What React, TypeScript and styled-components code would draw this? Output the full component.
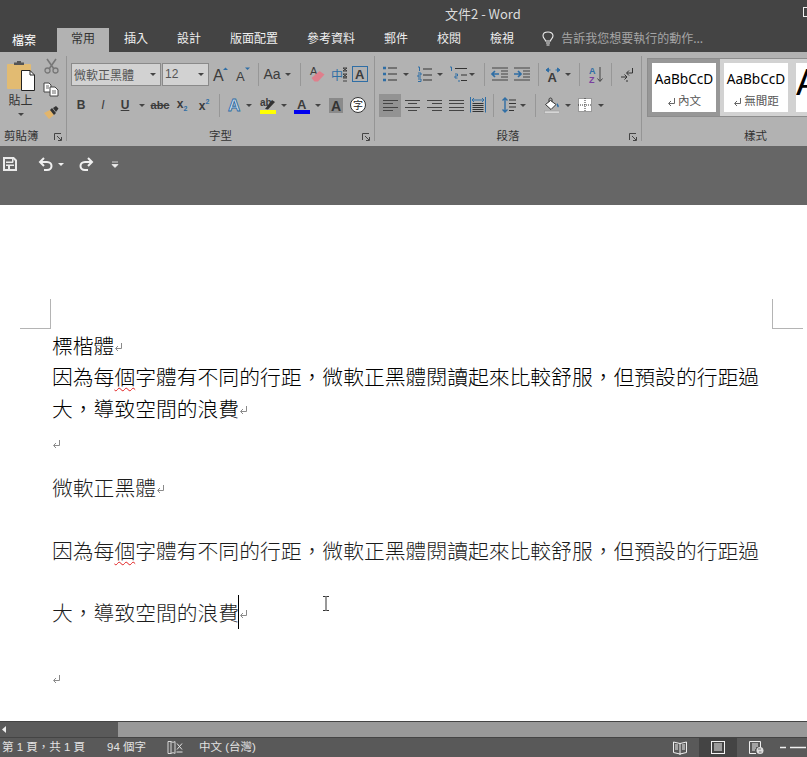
import React from 'react';
import styled, { createGlobalStyle } from 'styled-components';

const ink = '#3c3c3c';
const blue = '#2f6ea5';
const sans = '"Noto Sans CJK TC", "Liberation Sans", sans-serif';

const bodyLine = '因為每';
const wavyWord = '個';
const bodyRest = '字體有不同的行距\uFF0C微軟正黑體閱讀起來比較舒服\uFF0C但預設的行距過';
const lastLine = '大\uFF0C導致空間的浪費';
const pageCount = '第 1 頁\uFF0C共 1 頁';

const GlobalStyle = createGlobalStyle`
  html, body { margin: 0; padding: 0; height: 100%; overflow: hidden; background: #fff; }
  body { font-family: ${sans}; }
`;

const Window = styled.div`
  width: 807px;
  height: 757px;
  display: flex;
  flex-direction: column;
  overflow: hidden;
`;

const TitleBar = styled.div`
  height: 28px;
  flex: none;
  background: #444;
  color: #dcdcdc;
  font-size: 13px;
  line-height: 24px;
  display: flex;
  align-items: center;
  padding-left: 445px;
  position: relative;
`;

const RestoreBox = styled.span`
  position: absolute;
  left: 803px;
  top: 7px;
  width: 8px;
  height: 8px;
  border: 1px solid #eee;
`;

const TabBar = styled.div`
  height: 24px;
  flex: none;
  background: #444;
  display: flex;
`;

const FileTab = styled.div`
  width: 57px;
  padding: 2px 0 0 12px;
  box-sizing: border-box;
  color: #fff;
  font-size: 12px;
  line-height: 20px;
`;

const Tab = styled.div<{ $active?: boolean }>`
  padding: 0 14px;
  margin-right: 1px;
  background: ${p => (p.$active ? '#b2b2b2' : 'transparent')};
  color: ${p => (p.$active ? '#333' : '#f0f0f0')};
  font-size: 12px;
  line-height: 20px;
`;

const Tell = styled.div`
  margin-left: 13px;
  display: flex;
  align-items: center;
  gap: 7px;
  color: #a6a6a6;
  font-size: 12px;
  line-height: 20px;
  height: 20px;
  white-space: nowrap;
`;

const Ribbon = styled.div`
  height: 94px;
  flex: none;
  box-sizing: border-box;
  padding: 4px 0 5px;
  background: #b2b2b2;
  display: flex;
`;

const Group = styled.div<{ $w: number; $last?: boolean }>`
  position: relative;
  width: ${p => p.$w}px;
  flex: none;
  box-sizing: border-box;
  border-right: ${p => (p.$last ? 'none' : '1px solid #959595')};
  display: flex;
  flex-direction: column;
`;

const GroupLabel = styled.div<{ $pl?: number }>`
  margin-top: auto;
  height: 15px;
  line-height: 18px;
  text-align: ${p => (p.$pl === undefined ? 'center' : 'left')};
  padding-left: ${p => p.$pl ?? 0}px;
  font-size: 11.5px;
  color: #333;
`;

const Launcher = styled.svg`
  position: absolute;
  right: 4px;
  bottom: 0;
`;

const ClipBody = styled.div`
  display: flex;
  height: 70px;
`;

const PasteCol = styled.div`
  width: 42px;
  display: flex;
  flex-direction: column;
  align-items: center;
  color: #333;
  font-size: 12px;
  line-height: 16px;
  padding-top: 4px;
  box-sizing: border-box;
`;

const PasteText = styled.span`
  margin-left: -1px;
`;

const PasteCaret = styled.span`
  margin-top: 5px;
  width: 0;
  height: 0;
  display: block;
  border-left: 3px solid transparent;
  border-right: 3px solid transparent;
  border-top: 3px solid #444;
`;

const SmallCol = styled.div`
  width: 18px;
  display: flex;
  flex-direction: column;
  align-items: center;
  gap: 8px;
  padding-top: 2px;
`;

const Rows = styled.div`
  display: flex;
  flex-direction: column;
  gap: 7px;
  padding-top: 6px;
`;

const Row = styled.div<{ $pl: number }>`
  height: 24px;
  display: flex;
  align-items: center;
  padding-left: ${p => p.$pl}px;
`;

const Combo = styled.div<{ $w: number }>`
  width: ${p => p.$w}px;
  height: 23px;
  box-sizing: border-box;
  border: 1px solid #8a8a8a;
  background: #d2d2d2;
  margin-right: 1px;
  padding-left: 2px;
  display: flex;
  align-items: center;
  justify-content: space-between;
  font-family: "Liberation Sans", ${sans};
  font-size: 12px;
  color: #555;
`;

const Tool = styled.div<{ $w: number; $ml?: number; $on?: boolean }>`
  width: ${p => p.$w}px;
  margin-left: ${p => p.$ml ?? 0}px;
  height: 23px;
  flex: none;
  display: flex;
  align-items: center;
  justify-content: center;
  background: ${p => (p.$on ? '#939393' : 'transparent')};
`;

const Sep = styled.span<{ $ml: number; $mr?: number }>`
  width: 1px;
  height: 23px;
  flex: none;
  margin-left: ${p => p.$ml}px;
  margin-right: ${p => p.$mr ?? 0}px;
  background: #979797;
`;

const CaretMark = styled.span`
  width: 0;
  height: 0;
  display: block;
  border-left: 3px solid transparent;
  border-right: 3px solid transparent;
  border-top: 3px solid #444;
`;

const Glyph = styled.span<{ $size: number; $weight?: number; $italic?: boolean; $color?: string; $strike?: boolean; $under?: boolean }>`
  font-family: "Liberation Sans", sans-serif;
  font-size: ${p => p.$size}px;
  font-weight: ${p => p.$weight ?? 700};
  font-style: ${p => (p.$italic ? 'italic' : 'normal')};
  color: ${p => p.$color ?? ink};
  text-decoration: ${p => (p.$strike ? 'line-through' : p.$under ? 'underline' : 'none')};
  line-height: 1;
  position: relative;
`;

const Sub = styled.span<{ $up?: boolean }>`
  font-size: 7px;
  color: ${blue};
  vertical-align: ${p => (p.$up ? '6px' : '-3px')};
`;

const Gallery = styled.div`
  margin: 2px 0 0 5px;
  height: 59px;
  box-sizing: border-box;
  border: 1px solid #8d8d8d;
  border-right: none;
  background: #d2d2d2;
  display: flex;
  overflow: hidden;
`;

const StyleCell = styled.div<{ $on?: boolean }>`
  width: 72px;
  flex: none;
  box-sizing: border-box;
  padding: 4px;
  background: ${p => (p.$on ? '#979797' : 'transparent')};
`;

const StyleCard = styled.div`
  height: 49px;
  background: #fff;
  display: flex;
  flex-direction: column;
  align-items: center;
  overflow: hidden;
  white-space: nowrap;
`;

const Sample = styled.span`
  font-family: "Noto Sans", sans-serif;
  font-size: 13.6px;
  line-height: 20px;
  margin-top: 6px;
  color: #000;
`;

const SampleName = styled.span`
  font-size: 11.5px;
  line-height: 16px;
  margin-top: 3px;
  color: #555;
  display: flex;
  align-items: center;
  gap: 2px;
`;

const BigSample = styled.span`
  font-family: "Liberation Sans", sans-serif;
  font-size: 36px;
  line-height: 40px;
  color: #000;
  align-self: flex-start;
`;

const QuickBar = styled.div`
  height: 59px;
  flex: none;
  background: #666;
  display: flex;
  align-items: flex-start;
  padding: 11px 0 0 3px;
  box-sizing: border-box;
`;

const QuickSlot = styled.div<{ $w: number; $ml?: number }>`
  width: ${p => p.$w}px;
  margin-left: ${p => p.$ml ?? 0}px;
  height: 14px;
  flex: none;
  display: flex;
  align-items: center;
  justify-content: center;
`;

const QuickCaret = styled.span`
  width: 0;
  height: 0;
  border-left: 3px solid transparent;
  border-right: 3px solid transparent;
  border-top: 3px solid #f0f0f0;
`;

const Page = styled.div`
  flex: 1;
  min-height: 0;
  background: #fff;
  position: relative;
  padding-top: 94px;
  overflow: hidden;
`;

const MarkRow = styled.div`
  height: 30px;
  padding: 0 4px 0 20px;
  display: flex;
  justify-content: space-between;
`;

const Mark = styled.span<{ $side: 'left' | 'right' }>`
  width: 31px;
  box-sizing: border-box;
  border-bottom: 1px solid #b4b4b4;
  border-${p => (p.$side === 'left' ? 'right' : 'left')}: 1px solid #b4b4b4;
`;

const Line = styled.div<{ $h: number; $kai?: boolean }>`
  height: ${p => p.$h}px;
  padding-left: 52px;
  display: flex;
  align-items: center;
  font-size: 20.8px;
  color: ${p => (p.$kai ? '#000' : '#1c1c1c')};
  font-weight: 300;
  white-space: nowrap;
`;

const Wavy = styled.span`
  text-decoration: underline wavy #e02020 1px;
  text-underline-offset: 2px;
`;

const TextCaret = styled.span`
  width: 1px;
  height: 34px;
  background: #000;
  margin-left: -1px;
  flex: none;
`;

const Return = styled.svg`
  flex: none;
  margin-top: 4px;
`;

const IBeam = styled.svg`
  position: absolute;
  left: 322px;
  top: 391px;
`;

const ScrollBar = styled.div`
  height: 17px;
  flex: none;
  box-sizing: border-box;
  border-top: 1px solid #444;
  border-bottom: 1px solid #444;
  background: #5a5a5a;
  display: flex;
`;

const ScrollArrow = styled.div`
  width: 11px;
  box-sizing: border-box;
  padding-left: 2px;
  display: flex;
  align-items: center;
`;

const ScrollThumb = styled.div`
  margin-left: 107px;
  flex: 1;
  background: #999;
`;

const StatusBar = styled.div`
  height: 19px;
  flex: none;
  background: #595959;
  color: #e2e2e2;
  font-size: 11.5px;
  line-height: 17px;
  display: flex;
  align-items: center;
  padding-left: 2px;
  white-space: nowrap;
`;

const StatusText = styled.span<{ $w: number; $ml?: number }>`
  width: ${p => p.$w}px;
  margin-left: ${p => p.$ml ?? 0}px;
  flex: none;
  font-family: "Liberation Sans", ${sans};
`;

const ViewSlot = styled.div<{ $w: number; $ml?: number; $on?: boolean }>`
  width: ${p => p.$w}px;
  margin-left: ${p => p.$ml ?? 0}px;
  height: 19px;
  flex: none;
  display: flex;
  align-items: center;
  justify-content: center;
  background: ${p => (p.$on ? '#444' : 'transparent')};
`;

const IconSvg = styled.svg`
  display: block;
  overflow: visible;
  flex: none;
`;

const Caret = ({ w = 12, ml = 0 }: { w?: number; ml?: number }) => (
  <Tool $w={w} $ml={ml}><CaretMark /></Tool>
);

const Icon = ({ w, h, children }: { w: number; h: number; children: React.ReactNode }) => (
  <IconSvg width={w} height={h} viewBox={`0 0 ${w} ${h}`} fill="none">{children}</IconSvg>
);

const Corner = () => (
  <Launcher width="8" height="8" viewBox="0 0 8 8" fill="none">
    <path d="M0.5 7V0.5H7" stroke="#444" />
    <path d="M3 3L7 7M4 7.5H7.5V4" stroke="#444" />
  </Launcher>
);

const ReturnMark = ({ color = '#8a8a8a' }: { color?: string }) => (
  <Return width="9" height="10" viewBox="0 0 9 10" fill="none">
    <path d="M7.5 1V6.5H2" stroke={color} />
    <path d="M4 4L1.5 6.5L4 9" stroke={color} />
  </Return>
);

const PasteIcon = () => (
  <Icon w={30} h={32}>
    <rect x="1" y="4" width="24" height="25" rx="1" fill="#e2bb72" />
    <path d="M8 5V2.5H11V1H15V2.5H18V5Z" fill="#555" />
    <path d="M15.5 10.5H24L28.5 15V30.5H15.5Z" fill="#fff" stroke="#222" />
    <path d="M24 10.5V15H28.5" stroke="#222" />
  </Icon>
);

const ScissorsIcon = () => (
  <Icon w={15} h={16}>
    <path d="M3 1L10 11M12 1L5 11" stroke="#777" strokeWidth="1.6" />
    <circle cx="3.5" cy="12.5" r="2.5" stroke="#777" strokeWidth="1.3" />
    <circle cx="11.5" cy="12.5" r="2.5" stroke="#777" strokeWidth="1.3" />
  </Icon>
);

const CopyIcon = () => (
  <Icon w={16} h={15}>
    <path d="M1 1H6L8 3V10H1Z" fill="#fff" stroke="#444" />
    <path d="M7 5H12L15 8V14H7Z" fill="#fff" stroke="#444" />
    <path d="M3 4H6M3 6H6M9 9H13M9 11H13" stroke="#666" />
  </Icon>
);

const BrushIcon = () => (
  <Icon w={16} h={15}>
    <path d="M1 8L7 5L11 10L6 14Z" fill="#e2b56c" />
    <path d="M7 5L11 10L13 8L9 3Z" fill="#333" />
    <path d="M10 3L13 1L15.5 3.5L13 7" fill="#333" />
  </Icon>
);

const SizeIcon = ({ up }: { up?: boolean }) => (
  <Icon w={16} h={16}>
    <text x={up ? 0 : 1} y="15" fontFamily="Liberation Sans" fontSize={up ? 16 : 13} fill={ink}>A</text>
    <path d={up ? 'M10 4L12.5 1.500L15 4Z' : 'M10 1.500H15L12.500 4Z'} fill={blue} />
  </Icon>
);

const EraserIcon = () => (
  <Icon w={15} h={18}>
    <text x="0" y="10" fontFamily="Liberation Sans" fontSize="11" fill={ink}>A</text>
    <path d="M1.500 13L9.500 6L14.500 9.500L8 16.500H4.500Z" fill="#df7f8c" />
  </Icon>
);

const PhoneticIcon = () => (
  <Icon w={17} h={15}>
    <text x="0" y="13" fontFamily="Noto Sans CJK TC" fontSize="12" fill={blue}>中</text>
    <path d="M12 1H16M12 4H16M12 1L16 4M16 1L12 4M12 7H16M12 10H16M12 7L16 10M16 7L12 10M12 11H16M12 14H16" stroke="#333" strokeWidth="0.9" />
  </Icon>
);

const BoxA = () => (
  <Icon w={16} h={16}>
    <rect x="0.5" y="0.5" width="15" height="15" stroke={blue} />
    <text x="3" y="13" fontFamily="Liberation Sans" fontWeight="700" fontSize="13" fill={ink}>A</text>
  </Icon>
);

const EffectA = () => (
  <Icon w={14} h={16}>
    <text x="0" y="14" fontFamily="Liberation Sans" fontWeight="700" fontSize="17" fill="#d4e2ef" stroke={blue} strokeWidth="0.9">A</text>
  </Icon>
);

const HighlightIcon = () => (
  <Icon w={16} h={17}>
    <text x="0" y="9" fontFamily="Liberation Sans" fontWeight="700" fontSize="10" fill={ink}>ab</text>
    <path d="M5 12L12 3L15 5L8 12.500Z" fill="#333" />
    <rect x="0" y="13" width="16" height="4" fill="#ffff00" />
  </Icon>
);

const ColorA = () => (
  <Icon w={16} h={17}>
    <text x="3" y="12" fontFamily="Liberation Sans" fontWeight="700" fontSize="13" fill={ink}>A</text>
    <rect x="0" y="13" width="16" height="4" fill="#0000ee" />
  </Icon>
);

const ShadeA = () => (
  <Icon w={14} h={15}>
    <rect width="14" height="15" fill="#8a8a8a" />
    <text x="2" y="13" fontFamily="Liberation Sans" fontWeight="700" fontSize="14" fill="#333">A</text>
  </Icon>
);

const CircleChar = () => (
  <Icon w={16} h={16}>
    <circle cx="8" cy="8" r="7.5" fill="#fff" stroke="#333" />
    <text x="3" y="12" fontFamily="Noto Sans CJK TC" fontSize="10" fill="#222">字</text>
  </Icon>
);

const BulletIcon = () => (
  <Icon w={14} h={16}>
    <path d="M0 2H3M0 8H3M0 14H3" stroke={blue} strokeWidth="2.4" />
    <path d="M5 2H14M5 8H14M5 14H14" stroke="#333" />
  </Icon>
);

const NumberIcon = () => (
  <Icon w={15} h={16}>
    <path d="M1 1H2.500V5M1 7H4V9H1V11H4M1 13H4V15.500H1" stroke={blue} />
    <path d="M6 3H15M6 9H15M6 14H15" stroke="#333" />
  </Icon>
);

const MultiIcon = () => (
  <Icon w={18} h={16}>
    <path d="M1 1H2.500V5M6 8H8.500V10H6V12H8.500M10 14V16" stroke={blue} />
    <path d="M6 2.500H18M12 9H18M12 14.500H18" stroke="#333" />
  </Icon>
);

const IndentIcon = ({ out }: { out?: boolean }) => (
  <Icon w={16} h={14}>
    <path d={out ? 'M7 7H0M3 4L0 7L3 10' : 'M0 7H7M4 4L7 7L4 10'} stroke={blue} strokeWidth="1.700" />
    <path d="M0 1H16M9 4H16M9 7H16M9 10H16M0 13H16" stroke="#444" />
  </Icon>
);

const TwoWayA = () => (
  <Icon w={16} h={15}>
    <path d="M1 3L3.500 1V5ZM15 3L12.500 1V5ZM3 3H5.500M10.500 3H13" fill={blue} stroke={blue} />
    <text x="2.500" y="14.500" fontFamily="Liberation Sans" fontWeight="700" fontSize="13" fill={ink}>A</text>
  </Icon>
);

const SortIcon = () => (
  <Icon w={15} h={17}>
    <text x="0" y="8" fontFamily="Liberation Sans" fontWeight="700" fontSize="9" fill={blue}>A</text>
    <text x="0" y="17" fontFamily="Liberation Sans" fontWeight="700" fontSize="9" fill="#7a3fa0">Z</text>
    <path d="M11 1V15M8.500 12.500L11 15.500L13.500 12.500" stroke="#444" />
  </Icon>
);

const DirectionIcon = () => (
  <Icon w={12} h={15}>
    <path d="M11.500 1V6H6M8 3.500L5.500 6L8 8.500" stroke="#333" />
    <path d="M0 10H6M3.500 7.500L6 10L3.500 12.500M5 14H7" stroke="#333" />
  </Icon>
);

const AlignIcon = ({ kind }: { kind: 'left' | 'center' | 'right' | 'justify' }) => {
  const lines = {
    left: 'M0 0.500H15M0 3.500H10M0 7.500H15M0 10.500H10',
    center: 'M0 0.500H15M3 3.500H12M0 7.500H15M3 10.500H12',
    right: 'M0 0.500H15M5 3.500H15M0 7.500H15M5 10.500H15',
    justify: 'M0 0.500H15M0 3.500H15M0 7.500H15M0 10.500H15',
  }[kind];
  return (
    <Icon w={15} h={11}>
      <path d={lines} stroke="#444" />
    </Icon>
  );
};

const DistributeIcon = () => (
  <Icon w={16} h={16}>
    <path d="M0.500 0V15.500M15.500 0V15.500" stroke={blue} />
    <path d="M2 3H14M4 1L2 3L4 5M12 1L14 3L12 5" stroke={blue} />
    <path d="M2.500 6.500H13.500M2.500 8.500H13.500M2.500 10.500H13.500M2.500 12.500H13.500M2.500 14.500H13.500" stroke="#333" />
  </Icon>
);

const LineSpacingIcon = () => (
  <Icon w={14} h={16}>
    <path d="M3 1V15M0.500 3.500L3 1L5.500 3.500M0.500 12.500L3 15L5.500 12.500" stroke={blue} strokeWidth="1.400" />
    <path d="M7 3H14M7 6.500H14M7 10H14M7 13.500H12" stroke="#333" />
  </Icon>
);

const ShadingIcon = () => (
  <Icon w={16} h={17}>
    <path d="M5 5V2.500C5 0.500 8 0.500 8 2.500V5" stroke="#333" />
    <path d="M1.500 7.500L6.500 3.500L12 7.500L7 12.500Z" fill="#fff" stroke="#333" />
    <path d="M13 6C15 8 15.500 9.500 14 10.500C13 10 12.500 8 13 6Z" fill={blue} />
    <rect x="0.500" y="14" width="15" height="2.500" fill="#d6d6d6" stroke="#999" strokeWidth="0.500" />
  </Icon>
);

const BorderIcon = () => (
  <Icon w={14} h={14}>
    <rect width="14" height="14" fill="#fff" />
    <path d="M0.500 0.500H13.500V13.500H0.500ZM7 0V14M0 7H14" stroke="#333" strokeDasharray="1 1" />
  </Icon>
);

const SaveIcon = () => (
  <Icon w={14} h={14}>
    <path d="M1 1H10.500L13 3.500V13H1Z" fill="#666" stroke="#eaeaea" strokeWidth="2" />
    <rect x="3" y="7.500" width="8" height="1.500" fill="#eaeaea" />
    <rect x="9" y="2" width="1.500" height="3.500" fill="#eaeaea" />
    <rect x="3" y="4.500" width="7" height="1.500" fill="#eaeaea" />
    <rect x="5" y="9" width="2" height="4" fill="#eaeaea" />
  </Icon>
);

const UndoIcon = ({ redo }: { redo?: boolean }) => (
  <Icon w={15} h={14}>
    <g transform={redo ? 'matrix(-1 0 0 1 15 0)' : undefined}>
      <path d="M2 5H9C12 5 13.500 7 13.500 9C13.500 11 12 13 9 13H6" stroke="#f0f0f0" strokeWidth="2" />
      <path d="M6 1L2 5L6 9" stroke="#f0f0f0" strokeWidth="2" />
    </g>
  </Icon>
);

const ReadIcon = () => (
  <Icon w={14} h={14}>
    <path d="M0.500 1L7 2.500L13.500 1V11.500L7 13L0.500 11.500Z" fill="#595959" stroke="#eee" />
    <path d="M7 2V14M2 4H5M2 6H5M2 8H5M9 4H12M9 6H12M9 8H12" stroke="#eee" />
  </Icon>
);

const PrintIcon = () => (
  <Icon w={14} h={13}>
    <rect x="0.500" y="0.500" width="13" height="12" stroke="#f2f2f2" />
    <path d="M3 3H11M3 5H11M3 7H11M3 9H11" stroke="#f2f2f2" />
  </Icon>
);

const WebIcon = () => (
  <Icon w={15} h={13}>
    <path d="M0.500 0.500H11.500V8M0.500 0.500V12.500H7" stroke="#eee" />
    <path d="M3 3H9M3 5H9M3 7H7M3 9H6" stroke="#eee" />
    <circle cx="11" cy="9.500" r="3.500" fill="#ddd" />
    <path d="M9 8H12M10 11H12.500" stroke="#777" />
  </Icon>
);

const SpellIcon = () => (
  <Icon w={16} h={13}>
    <path d="M4 0.500H1V12.500H4M4 0.500C5 1.500 7 1.500 8 0.500V12.500C7 11.500 5 11.500 4 12.500V0.500" stroke="#e5e5e5" strokeWidth="0.900" />
    <path d="M10 2.500L15 8.500M15 2.500L10 8.500M9.500 11H15.500" stroke="#e5e5e5" />
  </Icon>
);

export default function App() {
  return (
    <Window>
      <GlobalStyle />
      <TitleBar>文件2 - Word<RestoreBox /></TitleBar>
      <TabBar>
        <FileTab>檔案</FileTab>
        <Tab $active>常用</Tab>
        <Tab>插入</Tab>
        <Tab>設計</Tab>
        <Tab>版面配置</Tab>
        <Tab>參考資料</Tab>
        <Tab>郵件</Tab>
        <Tab>校閱</Tab>
        <Tab>檢視</Tab>
        <Tell>
          <Icon w={12} h={15}>
            <path d="M3.500 10C3.500 8 1 7.500 1 4.800C1 2.500 3 1 6 1C9 1 11 2.500 11 4.800C11 7.500 8.500 8 8.500 10ZM4 12H8M4.500 14H7.500" stroke="#eee" strokeWidth="1.100" />
          </Icon>
          告訴我您想要執行的動作...
        </Tell>
      </TabBar>

      <Ribbon>
        <Group $w={67}>
          <ClipBody>
            <PasteCol>
              <PasteIcon />
              <PasteText>貼上</PasteText>
              <PasteCaret />
            </PasteCol>
            <SmallCol>
              <ScissorsIcon />
              <CopyIcon />
              <BrushIcon />
            </SmallCol>
          </ClipBody>
          <GroupLabel $pl={4}>剪貼簿</GroupLabel>
          <Corner />
        </Group>

        <Group $w={308}>
          <Rows>
            <Row $pl={4}>
              <Combo $w={90}>微軟正黑體<Caret w={14} /></Combo>
              <Combo $w={47}>12<Caret w={14} /></Combo>
              <Tool $w={22}><SizeIcon up /></Tool>
              <Tool $w={22}><SizeIcon /></Tool>
              <Sep $ml={4} />
              <Tool $w={20} $ml={3}><Glyph $size={14} $weight={400}>Aa</Glyph></Tool>
              <Caret />
              <Sep $ml={6} />
              <Tool $w={28} $ml={2}><EraserIcon /></Tool>
              <Tool $w={16}><PhoneticIcon /></Tool>
              <Tool $w={16} $ml={5}><BoxA /></Tool>
            </Row>
            <Row $pl={3}>
              <Tool $w={22}><Glyph $size={12}>B</Glyph></Tool>
              <Tool $w={22}><Glyph $size={12} $italic $weight={400}>I</Glyph></Tool>
              <Tool $w={22}><Glyph $size={12} $under>U</Glyph></Tool>
              <Caret />
              <Tool $w={22} $ml={1}><Glyph $size={11} $strike>abc</Glyph></Tool>
              <Tool $w={22}><Glyph $size={12}>x<Sub>2</Sub></Glyph></Tool>
              <Tool $w={22}><Glyph $size={12}>x<Sub $up>2</Sub></Glyph></Tool>
              <Sep $ml={4} />
              <Tool $w={22} $ml={4}><EffectA /></Tool>
              <Caret w={6} />
              <Tool $w={16} $ml={8}><HighlightIcon /></Tool>
              <Caret w={8} ml={4} />
              <Tool $w={16} $ml={6}><ColorA /></Tool>
              <Caret w={8} ml={4} />
              <Tool $w={14} $ml={7}><ShadeA /></Tool>
              <Tool $w={16} $ml={7}><CircleChar /></Tool>
            </Row>
          </Rows>
          <GroupLabel>字型</GroupLabel>
          <Corner />
        </Group>

        <Group $w={267}>
          <Rows>
            <Row $pl={8}>
              <Tool $w={14}><BulletIcon /></Tool>
              <Caret w={8} ml={5} />
              <Tool $w={14} $ml={7}><NumberIcon /></Tool>
              <Caret w={8} ml={5} />
              <Tool $w={18} $ml={5}><MultiIcon /></Tool>
              <Caret w={8} ml={1} />
              <Sep $ml={8} />
              <Tool $w={16} $ml={7}><IndentIcon out /></Tool>
              <Tool $w={16} $ml={6}><IndentIcon /></Tool>
              <Sep $ml={8} />
              <Tool $w={16} $ml={6}><TwoWayA /></Tool>
              <Caret w={8} ml={3} />
              <Sep $ml={7} />
              <Tool $w={15} $ml={9}><SortIcon /></Tool>
              <Sep $ml={7} />
              <Tool $w={12} $ml={9}><DirectionIcon /></Tool>
            </Row>
            <Row $pl={4}>
              <Tool $w={22} $on><AlignIcon kind="left" /></Tool>
              <Tool $w={15} $ml={4}><AlignIcon kind="center" /></Tool>
              <Tool $w={15} $ml={7}><AlignIcon kind="right" /></Tool>
              <Tool $w={15} $ml={7}><AlignIcon kind="justify" /></Tool>
              <Tool $w={16} $ml={6}><DistributeIcon /></Tool>
              <Sep $ml={7} />
              <Tool $w={14} $ml={8}><LineSpacingIcon /></Tool>
              <Caret w={8} ml={3} />
              <Sep $ml={8} />
              <Tool $w={16} $ml={8}><ShadingIcon /></Tool>
              <Caret w={8} ml={4} />
              <Tool $w={14} $ml={6}><BorderIcon /></Tool>
              <Caret w={8} ml={5} />
            </Row>
          </Rows>
          <GroupLabel>段落</GroupLabel>
          <Corner />
        </Group>

        <Group $w={165} $last>
          <Gallery>
            <StyleCell $on>
              <StyleCard>
                <Sample>AaBbCcD</Sample>
                <SampleName><ReturnMark color="#666" />內文</SampleName>
              </StyleCard>
            </StyleCell>
            <StyleCell>
              <StyleCard>
                <Sample>AaBbCcD</Sample>
                <SampleName><ReturnMark color="#666" />無間距</SampleName>
              </StyleCard>
            </StyleCell>
            <StyleCell>
              <StyleCard>
                <BigSample>A</BigSample>
              </StyleCard>
            </StyleCell>
          </Gallery>
          <GroupLabel $pl={102}>樣式</GroupLabel>
        </Group>
      </Ribbon>

      <QuickBar>
        <QuickSlot $w={14}><SaveIcon /></QuickSlot>
        <QuickSlot $w={15} $ml={21}><UndoIcon /></QuickSlot>
        <QuickSlot $w={6} $ml={5}><QuickCaret /></QuickSlot>
        <QuickSlot $w={15} $ml={15}><UndoIcon redo /></QuickSlot>
        <QuickSlot $w={6} $ml={18}>
          <Icon w={6} h={7}>
            <path d="M0 1H6M0 3.500H6L3 6.500Z" stroke="#f0f0f0" fill="#f0f0f0" strokeWidth="0.800" />
          </Icon>
        </QuickSlot>
      </QuickBar>

      <Page>
        <MarkRow>
          <Mark $side="left" />
          <Mark $side="right" />
        </MarkRow>
        <Line $h={32} $kai>標楷體<ReturnMark /></Line>
        <Line $h={30} $kai>{bodyLine}<Wavy>{wavyWord}</Wavy>{bodyRest}</Line>
        <Line $h={33} $kai>{lastLine}<ReturnMark /></Line>
        <Line $h={35}><ReturnMark /></Line>
        <Line $h={56}>微軟正黑體<ReturnMark /></Line>
        <Line $h={70}>{bodyLine}<Wavy>{wavyWord}</Wavy>{bodyRest}</Line>
        <Line $h={54}>{lastLine}<TextCaret /><ReturnMark /></Line>
        <Line $h={76}><ReturnMark /></Line>
        <IBeam width="8" height="15" viewBox="0 0 8 15" fill="none">
          <path d="M1 0.500H3.500L4 1L4.500 0.500H7M4 1V14M1 14.500H3.500L4 14L4.500 14.500H7" stroke="#333" />
        </IBeam>
      </Page>

      <ScrollBar>
        <ScrollArrow>
          <Icon w={4} h={7}><path d="M4 0V7L0 3.500Z" fill="#eee" /></Icon>
        </ScrollArrow>
        <ScrollThumb />
      </ScrollBar>

      <StatusBar>
        <StatusText $w={105}>{pageCount}</StatusText>
        <StatusText $w={60}>94 個字</StatusText>
        <SpellIcon />
        <StatusText $w={80} $ml={16}>中文 (台灣)</StatusText>
        <ViewSlot $w={14} $ml={394}><ReadIcon /></ViewSlot>
        <ViewSlot $w={38} $ml={12} $on><PrintIcon /></ViewSlot>
        <ViewSlot $w={15} $ml={12}><WebIcon /></ViewSlot>
        <Icon w={26} h={3}>
          <path d="M16 1.500H22M26 1.500H42" stroke="#f0f0f0" strokeWidth="1.500" />
        </Icon>
      </StatusBar>
    </Window>
  );
}
